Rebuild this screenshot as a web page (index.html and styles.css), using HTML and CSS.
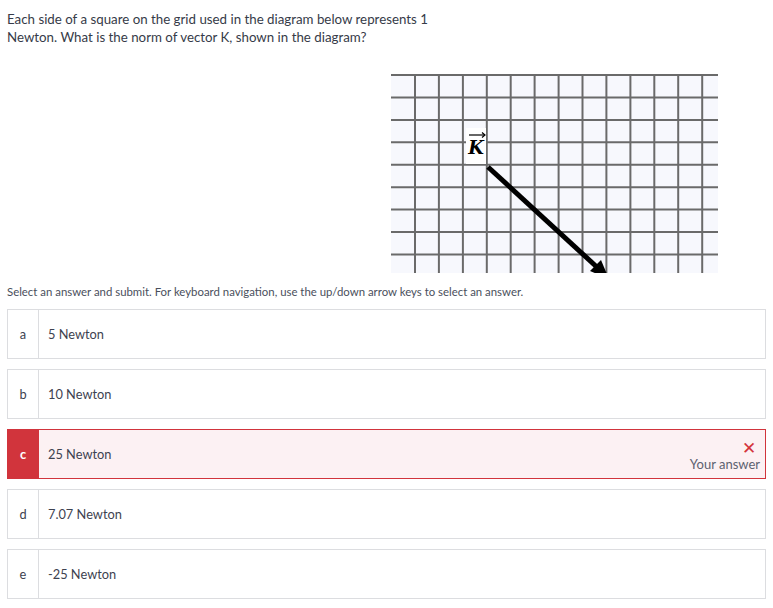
FILE: index.html
```html
<!DOCTYPE html>
<html>
<head>
<meta charset="utf-8">
<link rel="stylesheet" href="styles.css">
</head>
<body>
<div class="page">
  <p class="question">Each side of a square on the grid used in the diagram below represents 1<br>Newton. What is the norm of vector K, shown in the diagram?</p>
  <div class="figure">
    <svg class="grid" width="327" height="199" viewBox="0 0 327 199">
      <rect x="0" y="0" width="327" height="199" fill="#f7f8fd"/>
      <g stroke="#6a6a6a" stroke-width="2">
        <line x1="0" y1="1" x2="327" y2="1"/>
        <line x1="0" y1="23.4" x2="327" y2="23.4"/>
        <line x1="0" y1="45.9" x2="327" y2="45.9"/>
        <line x1="0" y1="68.3" x2="327" y2="68.3"/>
        <line x1="0" y1="90.8" x2="327" y2="90.8"/>
        <line x1="0" y1="113.2" x2="327" y2="113.2"/>
        <line x1="0" y1="135.6" x2="327" y2="135.6"/>
        <line x1="0" y1="158.1" x2="327" y2="158.1"/>
        <line x1="0" y1="180.5" x2="327" y2="180.5"/>
        <line x1="24" y1="0" x2="24" y2="199"/>
        <line x1="47.9" y1="0" x2="47.9" y2="199"/>
        <line x1="71.9" y1="0" x2="71.9" y2="199"/>
        <line x1="95.8" y1="0" x2="95.8" y2="199"/>
        <line x1="119.7" y1="0" x2="119.7" y2="199"/>
        <line x1="143.6" y1="0" x2="143.6" y2="199"/>
        <line x1="167.6" y1="0" x2="167.6" y2="199"/>
        <line x1="191.5" y1="0" x2="191.5" y2="199"/>
        <line x1="215.4" y1="0" x2="215.4" y2="199"/>
        <line x1="239.4" y1="0" x2="239.4" y2="199"/>
        <line x1="263.3" y1="0" x2="263.3" y2="199"/>
        <line x1="287.2" y1="0" x2="287.2" y2="199"/>
        <line x1="311.2" y1="0" x2="311.2" y2="199"/>
      </g>
      <rect x="75" y="54" width="20" height="36" fill="#fff"/>
      <text x="85" y="80" class="klabel" text-anchor="middle">K</text>
      <g stroke="#000" stroke-width="1.2" fill="none">
        <line x1="78" y1="61" x2="94" y2="61"/>
        <polyline points="91,58.5 94,61 91,63.5"/>
      </g>
      <line x1="97" y1="93" x2="208" y2="195" stroke="#000" stroke-width="5"/>
      <polygon points="218,205 199,197 210,186" fill="#000"/>
    </svg>
  </div>
  <p class="instructions">Select an answer and submit. For keyboard navigation, use the up/down arrow keys to select an answer.</p>
  <div class="answers">
    <div class="answer"><span class="letter">a</span><span class="text">5 Newton</span></div>
    <div class="answer"><span class="letter">b</span><span class="text">10 Newton</span></div>
    <div class="answer wrong"><span class="letter">c</span><span class="text">25 Newton</span>
      <span class="feedback"><span class="cross">✕</span><span class="yours">Your answer</span></span>
    </div>
    <div class="answer"><span class="letter">d</span><span class="text">7.07 Newton</span></div>
    <div class="answer"><span class="letter">e</span><span class="text">-25 Newton</span></div>
  </div>
</div>
</body>
</html>
```
FILE: styles.css
```css
html, body {
  margin: 0;
  padding: 0;
  background: #fff;
}
body {
  font-family: "Lato", "Noto Sans", sans-serif;
  color: #3a3f4c;
}
.page {
  padding: 10px 7px 0 7px;
}
.question {
  margin: 0;
  font-size: 13.3px;
  line-height: 18px;
  color: #363b48;
}
.figure {
  display: flex;
  justify-content: flex-end;
  padding-right: 48px;
  margin-top: 28px;
}
.grid {
  display: block;
}
.klabel {
  font-family: "DejaVu Serif", "Liberation Serif", serif;
  font-style: italic;
  font-weight: bold;
  font-size: 18px;
  fill: #000;
}
.instructions {
  margin: 12px 0 0 0;
  font-size: 11.4px;
  line-height: 14px;
  color: #4a4f5c;
}
.answers {
  margin-top: 10px;
  display: flex;
  flex-direction: column;
  gap: 10px;
}
.answer {
  display: flex;
  align-items: center;
  height: 50px;
  box-sizing: border-box;
  border: 1px solid #dcdde0;
  font-size: 12.8px;
  color: #3d4250;
}
.letter {
  width: 30px;
  align-self: stretch;
  display: flex;
  align-items: center;
  justify-content: center;
  border-right: 1px solid #dcdde0;
  flex-shrink: 0;
}
.text {
  padding-left: 9px;
  flex: 1;
}
.answer.wrong {
  border-color: #d1343c;
  background: #fcf1f3;
}
.answer.wrong .letter {
  background: #d1343c;
  color: #fff;
  font-weight: bold;
  border-right-color: #d1343c;
}
.feedback {
  display: flex;
  flex-direction: column;
  align-items: flex-end;
  padding-right: 5px;
  padding-top: 4px;
}
.cross {
  color: #d4343c;
  font-size: 17px;
  line-height: 17px;
  padding-right: 4px;
}
.yours {
  font-size: 13px;
  line-height: 17px;
  color: #5d6170;
}
```
